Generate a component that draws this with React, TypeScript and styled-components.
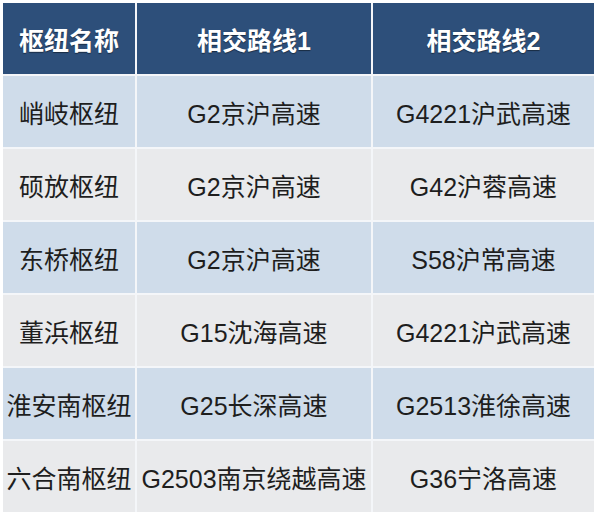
import styled, { createGlobalStyle } from 'styled-components';

const GlobalStyle = createGlobalStyle`
  html, body {
    margin: 0;
    padding: 0;
    background: #fff;
  }
  body {
    font-family: "Liberation Sans", "Noto Sans CJK SC", sans-serif;
  }
`;

const Page = styled.div`
  width: 600px;
  height: 517px;
  padding: 3px 6px 5px 3px;
  box-sizing: border-box;
  background: #fff;
`;

const Table = styled.div`
  display: grid;
  grid-template-columns: 132px 234px 1fr;
  grid-auto-rows: 1fr;
  gap: 2px;
  height: 100%;
  background: #f4f6f9;
`;

const HeadCell = styled.div`
  display: flex;
  align-items: center;
  justify-content: center;
  background: #2d4f7a;
  color: #fff;
  font-size: 25px;
  font-weight: 700;
  text-shadow: 0 1px 1px rgba(0, 0, 0, 0.45);
`;

const Cell = styled.div<{ $stripe: boolean }>`
  display: flex;
  align-items: center;
  justify-content: center;
  background: ${(p) => (p.$stripe ? '#cfdcea' : '#e9eaec')};
  color: #1e1e1e;
  font-size: 25px;
  white-space: nowrap;
`;

const headers = ['枢纽名称', '相交路线1', '相交路线2'];

const rows = [
  ['峭岐枢纽', 'G2京沪高速', 'G4221沪武高速'],
  ['硕放枢纽', 'G2京沪高速', 'G42沪蓉高速'],
  ['东桥枢纽', 'G2京沪高速', 'S58沪常高速'],
  ['董浜枢纽', 'G15沈海高速', 'G4221沪武高速'],
  ['淮安南枢纽', 'G25长深高速', 'G2513淮徐高速'],
  ['六合南枢纽', 'G2503南京绕越高速', 'G36宁洛高速'],
];

export default function App() {
  return (
    <>
      <GlobalStyle />
      <Page>
        <Table>
          {headers.map((h) => (
            <HeadCell key={h}>{h}</HeadCell>
          ))}
          {rows.map((row, i) =>
            row.map((text, j) => (
              <Cell key={`${i}-${j}`} $stripe={i % 2 === 0}>
                {text}
              </Cell>
            ))
          )}
        </Table>
      </Page>
    </>
  );
}
